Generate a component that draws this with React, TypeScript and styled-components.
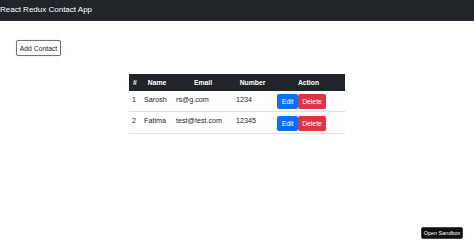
import styled, { createGlobalStyle } from "styled-components";

interface Contact {
  id: number;
  name: string;
  email: string;
  number: string;
}

const contacts: Contact[] = [
  { id: 1, name: "Sarosh", email: "rs@g.com", number: "1234" },
  { id: 2, name: "Fatima", email: "test@test.com", number: "12345" },
];

const App = () => {
  return (
    <>
      <GlobalStyle />
      <Navbar>
        <Brand>React Redux Contact App</Brand>
      </Navbar>
      <Main>
        <AddButton>Add Contact</AddButton>
        <Table>
          <colgroup>
            <col style={{ width: 12 }} />
            <col style={{ width: 32 }} />
            <col style={{ width: 60 }} />
            <col style={{ width: 39 }} />
            <col style={{ width: 73 }} />
          </colgroup>
          <thead>
            <tr>
              <Th>#</Th>
              <Th>Name</Th>
              <Th>Email</Th>
              <Th>Number</Th>
              <Th>Action</Th>
            </tr>
          </thead>
          <tbody>
            {contacts.map((c) => (
              <tr key={c.id}>
                <Td>{c.id}</Td>
                <Td>{c.name}</Td>
                <Td>{c.email}</Td>
                <Td>{c.number}</Td>
                <Td>
                  <Actions>
                    <ActionButton $variant="edit">Edit</ActionButton>
                    <ActionButton $variant="delete">Delete</ActionButton>
                  </Actions>
                </Td>
              </tr>
            ))}
          </tbody>
        </Table>
      </Main>
      <SandboxButton>Open Sandbox</SandboxButton>
    </>
  );
};

export default App;

const GlobalStyle = createGlobalStyle`
  body {
    margin: 0;
    background: #fff;
    font-family: "Liberation Sans", Arial, sans-serif;
    color: #212529;
  }
`;

const Navbar = styled.nav`
  height: 21px;
  background-color: #212529;
  display: flex;
  align-items: center;
  border-bottom: 1px solid #2c3035;
  box-sizing: border-box;
`;

const Brand = styled.span`
  color: #fff;
  font-size: 8px;
  margin-top: -1px;
`;

const Main = styled.main`
  padding: 19px 16px 0;
  display: flex;
  flex-direction: column;
  align-items: flex-start;
`;

const AddButton = styled.button`
  height: 16px;
  width: 45px;
  padding: 0;
  background: #fff;
  border: 1px solid #6c757d;
  border-radius: 2px;
  font-family: inherit;
  font-size: 6.8px;
  color: #212529;
  box-shadow: 0 0 1px #aaa;
`;

const Table = styled.table`
  align-self: center;
  margin-top: 18px;
  width: 216px;
  table-layout: fixed;
  border-collapse: collapse;
  font-size: 7.2px;
`;

const Th = styled.th`
  background: #212529;
  color: #fff;
  font-weight: bold;
  font-size: 6.8px;
  height: 16.5px;
  padding: 0;
  text-align: center;
`;

const Td = styled.td`
  height: 21.3px;
  padding: 3px 0 0 3px;
  vertical-align: top;
  line-height: 11px;
  border-bottom: 1px solid #dee2e6;
  box-sizing: border-box;
`;

const Actions = styled.div`
  display: flex;
  margin-left: 2px;
  margin-top: 0.5px;
`;

const ActionButton = styled.button<{ $variant: "edit" | "delete" }>`
  height: 15px;
  width: ${(p) => (p.$variant === "edit" ? "21px" : "28px")};
  padding: 0;
  border: none;
  border-radius: 2px;
  font-family: inherit;
  font-size: 6.8px;
  color: #fff;
  background: ${(p) => (p.$variant === "edit" ? "#0d6efd" : "#dc3545")};
`;

const SandboxButton = styled.button`
  position: fixed;
  right: 11px;
  bottom: 9px;
  width: 42px;
  height: 12px;
  padding: 0;
  border: 1px solid #444;
  border-radius: 2px;
  background: #111;
  color: #fff;
  font-family: inherit;
  font-size: 5.5px;
`;
